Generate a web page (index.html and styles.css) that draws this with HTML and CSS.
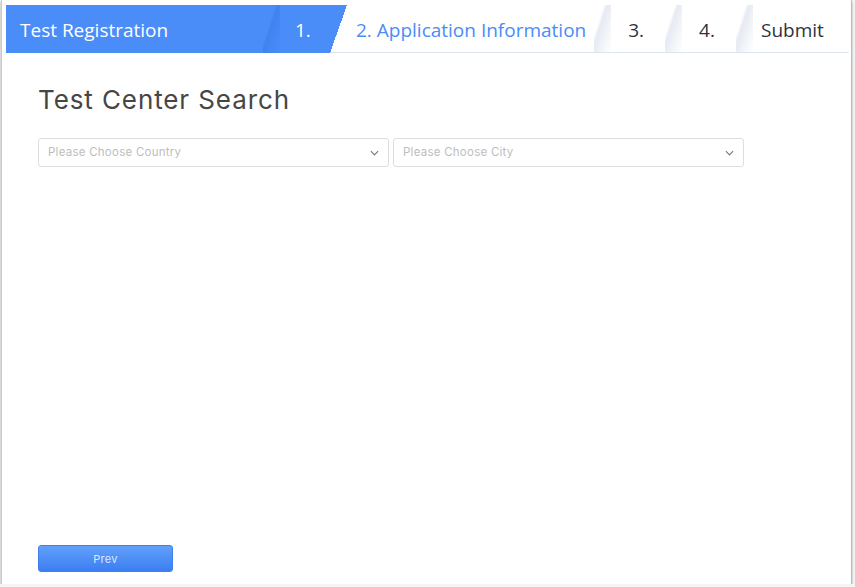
FILE: index.html
```html
<!DOCTYPE html>
<html lang="en">
<head>
<meta charset="utf-8">
<title>Test Registration</title>
<link rel="stylesheet" href="styles.css">
</head>
<body>
<div class="window">
  <header class="steps">
    <div class="tab brand">Test Registration</div>
    <span class="sep-blue"></span>
    <div class="tab step1">1.</div>
    <span class="edge"></span>
    <div class="tab current">2. Application Information</div>
    <span class="sep"></span>
    <div class="tab plain">3.</div>
    <span class="sep"></span>
    <div class="tab plain">4.</div>
    <span class="sep"></span>
    <div class="tab plain last">Submit</div>
  </header>
  <main class="content">
    <h1 class="title">Test Center Search</h1>
    <div class="filters">
      <div class="select">
        <span class="placeholder">Please Choose Country</span>
        <svg class="chev" viewBox="0 0 10 6" width="9" height="6"><path d="M1 1l4 4 4-4" fill="none" stroke="#7a7a7a" stroke-width="1.3"/></svg>
      </div>
      <div class="select">
        <span class="placeholder">Please Choose City</span>
        <svg class="chev" viewBox="0 0 10 6" width="9" height="6"><path d="M1 1l4 4 4-4" fill="none" stroke="#7a7a7a" stroke-width="1.3"/></svg>
      </div>
    </div>
    <div class="actions">
      <button class="btn" type="button">Prev</button>
    </div>
  </main>
</div>
</body>
</html>
```

FILE: styles.css
```css
html, body {
  margin: 0;
  padding: 0;
  background: #f4f4f4;
}

.window {
  box-sizing: border-box;
  margin-left: 1px;
  width: 851px;
  height: 584px;
  background: #fff;
  border-left: 1px solid #c9c9c9;
  border-right: 1px solid #bdbdbd;
  box-shadow: 0 2px 2px rgba(0, 0, 0, 0.35);
  padding: 5px 2px 12px 4px;
  display: flex;
  flex-direction: column;
}

.steps {
  display: flex;
  height: 48px;
  flex: none;
  font-family: "Open Sans", "Noto Sans", sans-serif;
  font-size: 19px;
}

.tab {
  display: flex;
  align-items: center;
  white-space: nowrap;
  box-sizing: border-box;
  padding-top: 2px;
}

.brand {
  background: #4a8cf8;
  color: #fff;
  width: 257px;
  padding-left: 14px;
}

.sep-blue {
  flex: none;
  width: 17px;
  background: linear-gradient(108deg, #4a8cf8 0%, #4a8cf8 38%, #3f82f0 46%, #4587f5 70%, #4a8cf8 100%);
}

.step1 {
  background: #4a8cf8;
  color: #fff;
  width: 50px;
  padding-left: 15px;
}

.edge {
  flex: none;
  width: 17px;
  background: linear-gradient(to bottom right, #4a8cf8 50%, #fff 50%);
  box-shadow: inset 0 -1px 0 #dbe4ef;
}

.sep {
  flex: none;
  width: 17px;
  background: linear-gradient(108deg, #fff 0%, #fff 30%, #e6eaf2 40%, #f5f7fa 75%, #fff 100%);
  box-shadow: inset 0 -1px 0 #dbe4ef;
}

.current {
  color: #4a8cf8;
  padding-left: 9px;
  padding-right: 8px;
  box-shadow: inset 0 -1px 0 #dbe4ef;
}

.plain {
  color: #2f3240;
  padding-left: 17px;
  padding-right: 21px;
  box-shadow: inset 0 -1px 0 #dbe4ef;
}

.last {
  flex: 1;
  padding-left: 8px;
}

.content {
  flex: 1;
  display: flex;
  flex-direction: column;
  padding: 0 0 0 32px;
  font-family: "Inter", "Noto Sans", sans-serif;
}

.title {
  margin: 31px 0 0;
  font-size: 26px;
  font-weight: 400;
  letter-spacing: 0.9px;
  color: #464646;
  line-height: 32px;
}

.filters {
  display: flex;
  gap: 4px;
  margin-top: 22px;
}

.select {
  box-sizing: border-box;
  width: 351px;
  height: 29px;
  border: 1px solid #dedede;
  border-radius: 3px;
  display: flex;
  align-items: center;
  justify-content: space-between;
  padding: 0 9px 2px 9px;
}

.placeholder {
  font-size: 11.5px;
  color: #bdbdbd;
  letter-spacing: 0.25px;
}

.chev {
  display: block;
  margin-top: 2px;
}

.actions {
  margin-top: auto;
}

.btn {
  width: 135px;
  height: 27px;
  border: 1px solid #3f80ee;
  border-radius: 3px;
  background: linear-gradient(to bottom, #62a0fa, #3b7ef2);
  color: #dce8ff;
  font-family: "Inter", "Noto Sans", sans-serif;
  font-size: 11px;
  letter-spacing: 0.3px;
  padding: 0;
}
```
